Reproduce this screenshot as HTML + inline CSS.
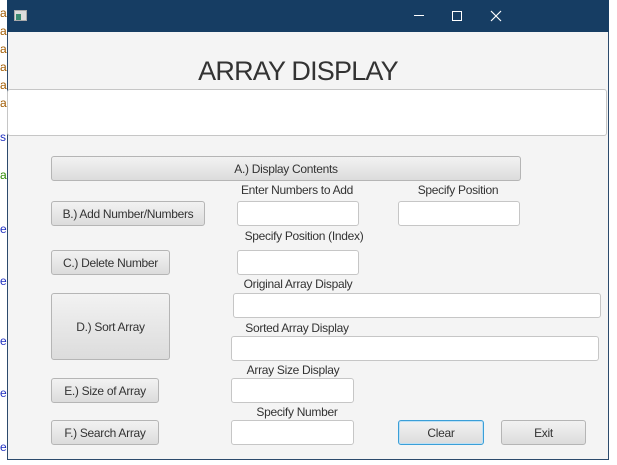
<!DOCTYPE html>
<html><head><meta charset="utf-8"><style>
*{margin:0;padding:0;box-sizing:border-box}
body{width:617px;height:465px;background:#fff;position:relative;overflow:hidden;font-family:"Liberation Sans",sans-serif;font-size:12px;color:#333}
.a{position:absolute}
.win{left:7px;top:0;width:602px;height:460px;background:#f4f4f4;border:1px solid #2c4a6c;border-top:none}
.tb{left:7px;top:0;width:602px;height:32px;background:#163d63}
.btn{position:absolute;border:1px solid #b5b5b5;border-radius:3px;background:linear-gradient(#f2f2f2,#dcdcdc);display:flex;align-items:center;justify-content:center;color:#333;letter-spacing:-0.3px}
.f{position:absolute;border:1px solid #c6c6c6;border-radius:3px;background:#fff}
.l{position:absolute;text-align:center;width:200px;letter-spacing:-0.3px;white-space:nowrap}
.side{position:absolute;left:0;font-size:12px;color:#a05a00}
</style></head><body>
<div class="side" style="top:6px">a</div><div class="side" style="top:24px">a</div><div class="side" style="top:42px">a</div><div class="side" style="top:60px">a</div><div class="side" style="top:78px">a</div><div class="side" style="top:96px">a</div>
<div class="side" style="top:130px;color:#2030c0">s</div><div class="side" style="top:168px;color:#2a8a00">a</div>
<div class="side" style="top:222px;color:#2030c0">e</div><div class="side" style="top:274px;color:#2030c0">e</div><div class="side" style="top:334px;color:#2030c0">e</div><div class="side" style="top:386px;color:#2030c0">e</div><div class="side" style="top:440px;color:#2030c0">e</div>
<div class="a win"></div>
<div class="a tb"></div>
<div class="a" style="left:14px;top:10px;width:13px;height:11px;background:#ddd;border:1px solid #aaa"><div style="position:absolute;left:1px;top:3px;width:5px;height:6px;background:#3a8a70"></div></div>
<div class="a" style="left:414px;top:15px;width:10px;height:1px;background:#fff"></div>
<div class="a" style="left:452px;top:11px;width:10px;height:10px;border:1px solid #fff"></div>
<svg class="a" style="left:490px;top:10px" width="12" height="12"><path d="M1 1L11 11M11 1L1 11" stroke="#fff" stroke-width="1.2"/></svg>
<div class="a" style="left:-3px;top:56px;width:602px;text-align:center;font-size:27px;color:#333;letter-spacing:-0.8px">ARRAY DISPLAY</div>
<div class="f" style="left:7px;top:89px;width:600px;height:47px;border-radius:3px"></div>
<div class="btn" style="left:51px;top:156px;width:470px;height:25px">A.) Display Contents</div>
<div class="l" style="left:197px;top:183px">Enter Numbers to Add</div>
<div class="l" style="left:358px;top:183px">Specify Position</div>
<div class="btn" style="left:51px;top:201px;width:154px;height:25px">B.) Add Number/Numbers</div>
<div class="f" style="left:237px;top:201px;width:122px;height:25px"></div>
<div class="f" style="left:398px;top:201px;width:122px;height:25px"></div>
<div class="l" style="left:204px;top:229px">Specify Position (Index)</div>
<div class="btn" style="left:51px;top:250px;width:119px;height:25px">C.) Delete Number</div>
<div class="f" style="left:237px;top:250px;width:122px;height:25px"></div>
<div class="l" style="left:198px;top:277px">Original Array Dispaly</div>
<div class="btn" style="left:51px;top:293px;width:119px;height:67px">D.) Sort Array</div>
<div class="f" style="left:233px;top:293px;width:368px;height:25px"></div>
<div class="l" style="left:197px;top:321px">Sorted Array Display</div>
<div class="f" style="left:231px;top:336px;width:368px;height:25px"></div>
<div class="l" style="left:193px;top:363px">Array Size Display</div>
<div class="btn" style="left:51px;top:378px;width:108px;height:25px">E.) Size of Array</div>
<div class="f" style="left:231px;top:378px;width:123px;height:25px"></div>
<div class="l" style="left:197px;top:405px">Specify Number</div>
<div class="btn" style="left:51px;top:420px;width:108px;height:25px">F.) Search Array</div>
<div class="f" style="left:231px;top:420px;width:123px;height:25px"></div>
<div class="btn" style="left:398px;top:420px;width:86px;height:25px;border:1px solid #3a9fd8;box-shadow:inset 0 0 0 1px #bfe0f4">Clear</div>
<div class="btn" style="left:501px;top:420px;width:85px;height:25px">Exit</div>
</body></html>
